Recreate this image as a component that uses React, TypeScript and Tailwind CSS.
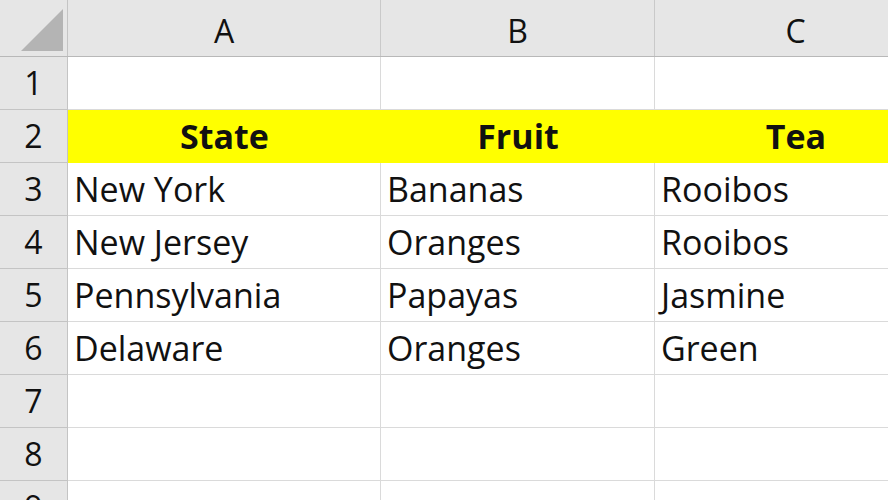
const columns = ["A", "B", "C"];

const rows: { cells: string[]; header?: boolean }[] = [
  { cells: ["", "", ""] },
  { cells: ["State", "Fruit", "Tea"], header: true },
  { cells: ["New York", "Bananas", "Rooibos"] },
  { cells: ["New Jersey", "Oranges", "Rooibos"] },
  { cells: ["Pennsylvania", "Papayas", "Jasmine"] },
  { cells: ["Delaware", "Oranges", "Green"] },
  { cells: ["", "", ""] },
  { cells: ["", "", ""] },
  { cells: ["", "", ""] },
];

const colWidths = ["w-[313px]", "w-[274px]", "w-[282px]"];

export default function App() {
  return (
    <div className="h-[500px] w-[888px] overflow-hidden bg-white font-['Open_Sans',sans-serif] text-[#111]">
      <div className="flex h-[57px] border-b border-[#b8b8b8] bg-[#e6e6e6]">
        <div className="relative w-[68px] shrink-0 border-r border-[#c4c4c4]">
          <div className="absolute bottom-[5px] right-[4px] h-0 w-0 border-b-[42px] border-l-[42px] border-b-[#b4b4b4] border-l-transparent" />
        </div>
        {columns.map((col, i) => (
          <div
            key={col}
            className={`${colWidths[i]} flex shrink-0 items-center justify-center border-r border-[#c9c9c9] pt-[6px] text-[32px]`}
          >
            {col}
          </div>
        ))}
      </div>
      {rows.map((row, r) => (
        <div key={`row-${String(r)}`} className="flex h-[53px]">
          <div className="flex w-[68px] shrink-0 items-center justify-center border-b border-r border-[#c4c4c4] bg-[#e6e6e6] text-[32px]">
            {r + 1}
          </div>
          {row.cells.map((cell, i) => (
            <div
              key={`cell-${String(i)}`}
              className={`${colWidths[i]} flex shrink-0 items-center text-[34px] ${
                row.header
                  ? "justify-center bg-[#ffff00] font-bold"
                  : "border-b border-r border-[#dadada] pl-[6px]"
              }`}
            >
              {cell}
            </div>
          ))}
        </div>
      ))}
    </div>
  );
}
